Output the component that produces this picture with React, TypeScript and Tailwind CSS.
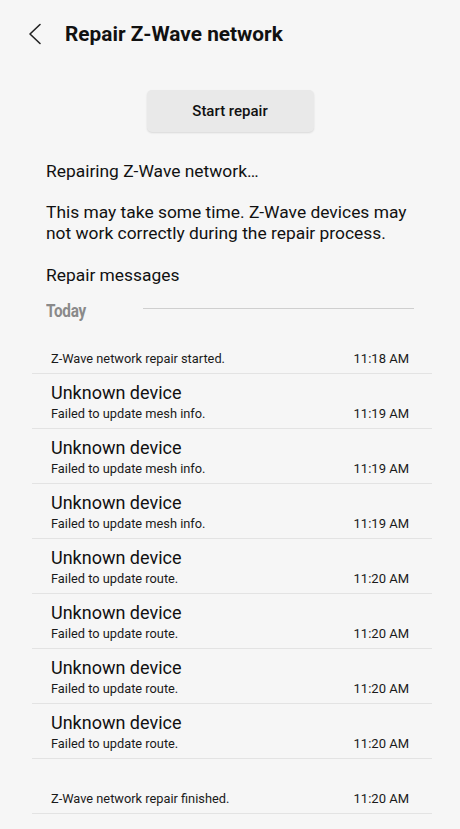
import React from "react";

type Row = { title?: string; sub: string; time: string };

const rows: Row[] = [
  { sub: "Z-Wave network repair started.", time: "11:18 AM" },
  { title: "Unknown device", sub: "Failed to update mesh info.", time: "11:19 AM" },
  { title: "Unknown device", sub: "Failed to update mesh info.", time: "11:19 AM" },
  { title: "Unknown device", sub: "Failed to update mesh info.", time: "11:19 AM" },
  { title: "Unknown device", sub: "Failed to update route.", time: "11:20 AM" },
  { title: "Unknown device", sub: "Failed to update route.", time: "11:20 AM" },
  { title: "Unknown device", sub: "Failed to update route.", time: "11:20 AM" },
  { title: "Unknown device", sub: "Failed to update route.", time: "11:20 AM" },
  { sub: "Z-Wave network repair finished.", time: "11:20 AM" },
];

export default function App() {
  return (
    <div
      className="w-[460px] h-[829px] overflow-hidden bg-[#f6f6f6] text-[#111]"
      style={{ fontFamily: "Roboto, 'Noto Sans', sans-serif" }}
    >
      {/* Header */}
      <div className="flex items-center h-[68px] pl-[27px]">
        <svg width="16" height="22" viewBox="0 0 16 22" className="mr-[22px]">
          <path d="M13 1.5 L3 11 L13 20.5" fill="none" stroke="#222" strokeWidth="1.6" strokeLinecap="round" strokeLinejoin="round" />
        </svg>
        <h1 className="text-[20.8px] font-bold text-[#111] leading-none">Repair Z-Wave network</h1>
      </div>

      {/* Button */}
      <div className="flex justify-center mt-[22px]">
        <button className="w-[167px] h-[42px] rounded-[5px] bg-[#e9e9e9] shadow-[0_1px_2px_rgba(0,0,0,0.12)] text-[15px] font-medium text-[#111]">
          Start repair
        </button>
      </div>

      {/* Texts */}
      <div className="pl-[46px] pr-[30px]">
        <p className="mt-[28px] text-[17.4px] leading-[22px] text-[#111]">Repairing Z-Wave network…</p>
        <p className="mt-[20px] text-[17.4px] leading-[21px] text-[#111]">
          This may take some time. Z-Wave devices may not work correctly during the repair process.
        </p>
        <p className="mt-[20px] text-[17.4px] leading-[22px] text-[#111]">Repair messages</p>
      </div>

      {/* Today header */}
      <div className="flex items-center pl-[46px] pr-[46px] mt-[14px] h-[20px]">
        <div className="w-[97px]">
          <span className="inline-block text-[18px] font-bold tracking-[-0.3px] text-[#8a8a8a] scale-x-[0.85] origin-left">Today</span>
        </div>
        <div className="flex-1 h-px bg-[#cfcfcf] -mt-[3px]" />
      </div>

      {/* Rows */}
      <div className="ml-[32px] mr-[28px] -mt-px">
        {rows.map((r, i) => (
          <div key={i} className="h-[55px] border-b border-[#e3e3e3] pl-[19px] pr-[23px] flex flex-col">
            <div className="h-[30px] flex items-end">
              {r.title && <span className="text-[18px] leading-[22px] text-[#111]">{r.title}</span>}
            </div>
            <div className="flex justify-between items-center h-[20px]">
              <span className="text-[12.8px] text-[#1a1a1a]">{r.sub}</span>
              <span className="text-[13px] text-[#1a1a1a]">{r.time}</span>
            </div>
          </div>
        ))}
      </div>
    </div>
  );
}
